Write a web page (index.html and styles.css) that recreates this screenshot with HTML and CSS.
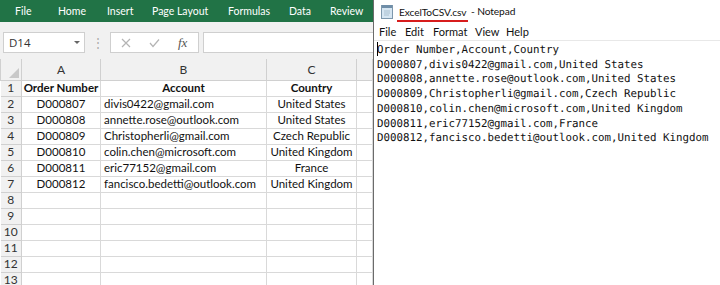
FILE: index.html
```html
<!DOCTYPE html>
<html lang="en">
<head>
    <meta charset="UTF-8">
    <title>Excel to CSV</title>
    <link rel="stylesheet" href="styles.css">
</head>
<body>

    <div id="excel">
        <div class="tabs">
            <span class="tab tab-file">File</span>
            <span class="tab tab-home">Home</span>
            <span class="tab tab-insert">Insert</span>
            <span class="tab tab-layout">Page Layout</span>
            <span class="tab tab-formulas">Formulas</span>
            <span class="tab tab-data">Data</span>
            <span class="tab">Review</span>
        </div>
        <div class="formula-row">
            <div class="name-box">
                <span>D14</span>
                <span class="caret"></span>
            </div>
            <div class="grip">&#8942;</div>
            <div class="fx-box">
                <svg width="10" height="10" viewBox="0 0 10 10"><path d="M1 1 L9 9 M9 1 L1 9" stroke="#b4b4b4" stroke-width="1.2" fill="none"/></svg>
                <svg width="11" height="10" viewBox="0 0 11 10"><path d="M1 5 L4 8.5 L10 1.5" stroke="#b4b4b4" stroke-width="1.2" fill="none"/></svg>
                <span class="fx">fx</span>
            </div>
            <div class="input-box"></div>
        </div>
        <table class="grid">
            <tr class="col-head">
                <th class="corner"><span class="tri"></span></th>
                <th>A</th>
                <th>B</th>
                <th>C</th>
                <th class="col-d"></th>
            </tr>
            <tr class="head-row">
                <th class="num">1</th>
                <td class="center">Order Number</td>
                <td class="center">Account</td>
                <td class="center">Country</td>
                <td></td>
            </tr>
            <tr>
                <th class="num">2</th>
                <td class="center">D000807</td>
                <td>divis0422@gmail.com</td>
                <td class="center">United States</td>
                <td></td>
            </tr>
            <tr>
                <th class="num">3</th>
                <td class="center">D000808</td>
                <td>annette.rose@outlook.com</td>
                <td class="center">United States</td>
                <td></td>
            </tr>
            <tr>
                <th class="num">4</th>
                <td class="center">D000809</td>
                <td>Christopherli@gmail.com</td>
                <td class="center">Czech Republic</td>
                <td></td>
            </tr>
            <tr>
                <th class="num">5</th>
                <td class="center">D000810</td>
                <td>colin.chen@microsoft.com</td>
                <td class="center">United Kingdom</td>
                <td></td>
            </tr>
            <tr>
                <th class="num">6</th>
                <td class="center">D000811</td>
                <td>eric77152@gmail.com</td>
                <td class="center">France</td>
                <td></td>
            </tr>
            <tr>
                <th class="num">7</th>
                <td class="center">D000812</td>
                <td>fancisco.bedetti@outlook.com</td>
                <td class="center">United Kingdom</td>
                <td></td>
            </tr>
            <tr><th class="num">8</th><td></td><td></td><td></td><td></td></tr>
            <tr><th class="num">9</th><td></td><td></td><td></td><td></td></tr>
            <tr><th class="num">10</th><td></td><td></td><td></td><td></td></tr>
            <tr><th class="num">11</th><td></td><td></td><td></td><td></td></tr>
            <tr><th class="num">12</th><td></td><td></td><td></td><td></td></tr>
            <tr><th class="num">13</th><td></td><td></td><td></td><td></td></tr>
        </table>
    </div>

    <div id="notepad">
        <div class="title-bar">
            <svg class="np-icon" width="13" height="15" viewBox="0 0 13 15">
                <rect x="0.5" y="1.5" width="11" height="13" fill="#d6e6f2" stroke="#7d98ad"/>
                <rect x="1" y="1" width="10" height="3" fill="#6f8ea8"/>
                <path d="M3 7 H9 M3 9 H9 M3 11 H8" stroke="#9fb6c8" stroke-width="0.8"/>
            </svg>
            <span class="file-name">ExcelToCSV.csv</span>
            <span>&nbsp;- Notepad</span>
        </div>
        <div class="menu">
            <span class="m-file">File</span>
            <span class="m-edit">Edit</span>
            <span class="m-format">Format</span>
            <span class="m-view">View</span>
            <span>Help</span>
        </div>
        <div class="edit-area"><span class="cursor"></span>Order Number,Account,Country
D000807,divis0422@gmail.com,United States
D000808,annette.rose@outlook.com,United States
D000809,Christopherli@gmail.com,Czech Republic
D000810,colin.chen@microsoft.com,United Kingdom
D000811,eric77152@gmail.com,France
D000812,fancisco.bedetti@outlook.com,United Kingdom</div>
    </div>

</body>
</html>
```

FILE: styles.css
```css
body {
    margin: 0;
    padding: 0;
    width: 720px;
    height: 285px;
    overflow: hidden;
    display: flex;
    background-color: #fff;
    font-family: 'Lato', sans-serif;
    color: #222;
}

#excel {
    width: 373px;
    flex-shrink: 0;
    overflow: hidden;
}

.tabs {
    height: 22px;
    background-color: #217346;
    display: flex;
    align-items: center;
    padding-left: 15px;
    color: #fff;
    font-size: 10.5px;
    white-space: nowrap;
}

.tab { flex: none; }
.tab-file { width: 43px; }
.tab-home { width: 49px; }
.tab-insert { width: 45px; }
.tab-layout { width: 76px; }
.tab-formulas { width: 61px; }
.tab-data { width: 41px; }

.formula-row {
    height: 37px;
    box-sizing: border-box;
    padding: 10px 0 6px 3px;
    background-color: #f1f1f1;
    display: flex;
}

.name-box {
    width: 82px;
    box-sizing: border-box;
    background-color: #fff;
    border: 1px solid #cfcfcf;
    display: flex;
    align-items: center;
    justify-content: space-between;
    padding: 0 4px 0 5px;
    font-family: 'Open Sans', sans-serif;
    font-size: 11.5px;
    color: #333;
}

.caret {
    width: 0;
    height: 0;
    border-left: 3px solid transparent;
    border-right: 3px solid transparent;
    border-top: 3px solid #666;
}

.grip {
    width: 25px;
    text-align: center;
    color: #aaa;
    font-size: 12px;
    line-height: 21px;
}

.fx-box {
    width: 89px;
    box-sizing: border-box;
    background-color: #fff;
    border: 1px solid #cfcfcf;
    display: flex;
    align-items: center;
    gap: 18px;
    padding-left: 10px;
}

.fx {
    font-family: 'Liberation Serif', serif;
    font-style: italic;
    font-size: 13px;
    color: #555;
}

.input-box {
    flex: 1;
    margin-left: 4px;
    background-color: #fff;
    border: 1px solid #cfcfcf;
    border-right: none;
}

.grid {
    border-collapse: collapse;
    table-layout: fixed;
    width: 373px;
    font-family: 'Lato', sans-serif;
    font-size: 11.5px;
    color: #111;
}

.grid th, .grid td {
    padding: 0;
}

.grid tr {
    height: 16px;
}

.grid tr.col-head {
    height: 21px;
}

.col-head th {
    background-color: #f1f1f1;
    border: 1px solid #d0d0d0;
    border-top: none;
    font-weight: normal;
    font-size: 12px;
    color: #333;
}

.col-head th:nth-child(1) { width: 20px; }
.col-head th:nth-child(2) { width: 78px; }
.col-head th:nth-child(3) { width: 165px; }
.col-head th:nth-child(4) { width: 89px; }

.corner {
    position: relative;
}

.tri {
    position: absolute;
    right: 2px;
    bottom: 2px;
    width: 0;
    height: 0;
    border-left: 10px solid transparent;
    border-bottom: 10px solid #c8c8c8;
}

.grid td {
    border: 1px solid #d9d9d9;
    padding-left: 3px;
    white-space: nowrap;
    overflow: hidden;
    line-height: 14px;
}

.grid td.center {
    text-align: center;
    padding-left: 0;
}

.head-row td {
    font-weight: bold;
}

.num {
    background-color: #f1f1f1;
    border: 1px solid #d0d0d0;
    border-left: none;
    font-weight: normal;
    font-size: 12px;
    color: #333;
    text-align: center;
    line-height: 14px;
}

#notepad {
    flex: 1;
    border-left: 1px solid #6b6b6b;
    display: flex;
    flex-direction: column;
    font-family: 'Lato', sans-serif;
    color: #111;
}

.title-bar {
    height: 22px;
    display: flex;
    align-items: center;
    padding-left: 7px;
    font-size: 10.2px;
    letter-spacing: -0.1px;
    white-space: nowrap;
}

.np-icon {
    margin-right: 5px;
}

.file-name {
    border-bottom: 2px solid #d71c1c;
    padding: 0 2px;
    margin-left: -2px;
    line-height: 16px;
    margin-top: 3px;
}

.menu {
    height: 18px;
    display: flex;
    align-items: center;
    padding-left: 5px;
    font-size: 11px;
}

.menu span { flex: none; }
.m-file { width: 26px; }
.m-edit { width: 28px; }
.m-format { width: 42px; }
.m-view { width: 31px; }

.edit-area {
    flex: 1;
    border-top: 1px solid #e8e8e8;
    padding: 1px 0 0 3px;
    font-family: 'DejaVu Sans Mono', monospace;
    font-size: 10.8px;
    text-rendering: geometricPrecision;
    line-height: 14.7px;
    white-space: pre;
    color: #111;
}

.cursor {
    display: inline-block;
    width: 1px;
    height: 14px;
    margin-right: -1px;
    background-color: #000;
    vertical-align: -3px;
}
```
